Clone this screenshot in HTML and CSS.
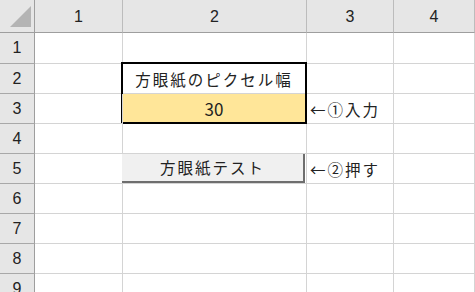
FILE: index.html
```html
<!DOCTYPE html>
<html lang="ja">
<head>
  <meta charset="UTF-8">
  <title>方眼紙テスト</title>
  <link rel="stylesheet" href="styles.css">
</head>
<body>
  <div class="sheet">
    <!-- header row -->
    <div class="corner">
      <svg width="34" height="32" viewBox="0 0 34 32"><polygon points="31,6 31,27 10,27" fill="#b4b4b4"/></svg>
    </div>
    <div class="col-head">1</div>
    <div class="col-head">2</div>
    <div class="col-head">3</div>
    <div class="col-head">4</div>

    <!-- row 1 -->
    <div class="row-head">1</div>
    <div class="cell"></div><div class="cell"></div><div class="cell"></div><div class="cell"></div>

    <!-- row 2 (box spans rows 2-3) -->
    <div class="row-head">2</div>
    <div class="cell"></div>
    <div class="box">
      <div class="label">方眼紙のピクセル幅</div>
      <div class="input-cell">30</div>
    </div>
    <div class="cell"></div><div class="cell"></div>

    <!-- row 3 -->
    <div class="row-head">3</div>
    <div class="cell"></div>
    <div class="cell note">←①入力</div>
    <div class="cell"></div>

    <!-- row 4 -->
    <div class="row-head">4</div>
    <div class="cell"></div><div class="cell"></div><div class="cell"></div><div class="cell"></div>

    <!-- row 5 -->
    <div class="row-head">5</div>
    <div class="cell"></div>
    <div class="cell btn-cell"><button class="sheet-btn">方眼紙テスト</button></div>
    <div class="cell note">←②押す</div>
    <div class="cell"></div>

    <div class="row-head">6</div>
    <div class="cell"></div><div class="cell"></div><div class="cell"></div><div class="cell"></div>
    <div class="row-head">7</div>
    <div class="cell"></div><div class="cell"></div><div class="cell"></div><div class="cell"></div>
    <div class="row-head">8</div>
    <div class="cell"></div><div class="cell"></div><div class="cell"></div><div class="cell"></div>
    <div class="row-head">9</div>
    <div class="cell"></div><div class="cell"></div><div class="cell"></div><div class="cell"></div>
  </div>
</body>
</html>
```

FILE: styles.css
```css
* {
  box-sizing: border-box;
}

body {
  margin: 0;
  background-color: white;
  font-family: "Noto Sans CJK JP", sans-serif;
  overflow: hidden;
}

.sheet {
  display: grid;
  grid-template-columns: 35px 88px 184px 87px 1fr;
  grid-template-rows: 33px 31px repeat(8, 30px);
  width: 475px;
}

.corner,
.col-head,
.row-head {
  background-color: #e6e6e6;
  color: #222;
  font-family: "Liberation Sans", Arial, sans-serif;
  font-size: 16px;
  display: flex;
  align-items: center;
  justify-content: center;
}

.corner {
  border-right: 1px solid #9e9e9e;
  border-bottom: 1px solid #9e9e9e;
}

.col-head {
  border-right: 1px solid #bcbcbc;
  border-bottom: 1px solid #9e9e9e;
  padding-top: 1px;
}

.row-head {
  border-right: 1px solid #9e9e9e;
  border-bottom: 1px solid #a8a8a8;
}

.cell {
  border-right: 1px solid #d4d4d4;
  border-bottom: 1px solid #d4d4d4;
  font-size: 15.5px;
  letter-spacing: 2px;
  color: #222;
  display: flex;
  align-items: center;
}

.note {
  padding-left: 3px;
}

.box {
  grid-row: span 2;
  margin: -2px 0 0 -2px;
  border: 2px solid black;
  display: flex;
  flex-direction: column;
}

.label {
  flex: 1;
  display: flex;
  align-items: center;
  justify-content: center;
  border-bottom: 1px solid #d4d4d4;
  font-size: 15.5px;
  letter-spacing: 2px;
  color: #222;
}

.input-cell {
  height: 28px;
  background-color: #ffe699;
  display: flex;
  align-items: center;
  justify-content: center;
  font-size: 17px;
  color: #222;
}

.btn-cell {
  padding: 0;
}

.sheet-btn {
  width: 100%;
  height: 100%;
  margin: -1px 0 0 -1px;
  background-color: #f0f0f0;
  border: none;
  border-right: 2px solid #6e6e6e;
  border-bottom: 2px solid #6e6e6e;
  font-family: "Noto Sans CJK JP", sans-serif;
  font-size: 15.5px;
  letter-spacing: 2px;
  color: #222;
  padding: 0;
}
```
